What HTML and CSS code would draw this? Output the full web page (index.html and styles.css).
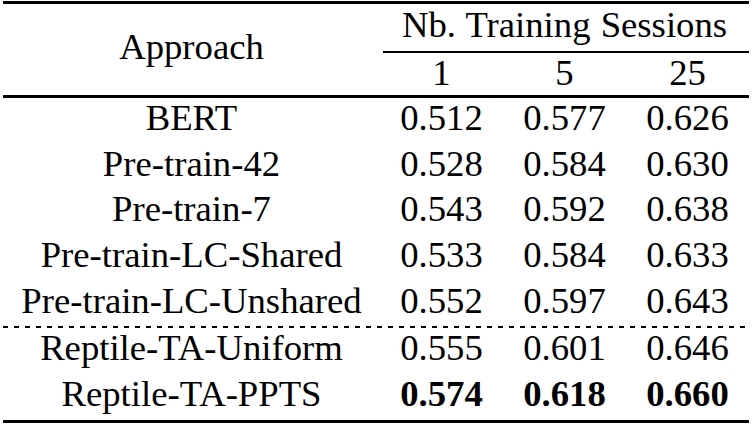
FILE: index.html
```html
<!DOCTYPE html>
<html>
<head>
<meta charset="utf-8">
<link rel="stylesheet" href="styles.css">
</head>
<body>
<div class="table">
  <div class="rule thick"></div>
  <div class="head">
    <div class="approach">Approach</div>
    <div class="group">
      <div class="group-title">Nb. Training Sessions</div>
      <div class="cmid"></div>
      <div class="cols"><span>1</span><span>5</span><span>25</span></div>
    </div>
  </div>
  <div class="rule mid"></div>
  <div class="block upper">
    <div class="row"><span>BERT</span><span>0.512</span><span>0.577</span><span>0.626</span></div>
    <div class="row"><span>Pre-train-42</span><span>0.528</span><span>0.584</span><span>0.630</span></div>
    <div class="row"><span>Pre-train-7</span><span>0.543</span><span>0.592</span><span>0.638</span></div>
    <div class="row"><span>Pre-train-LC-Shared</span><span>0.533</span><span>0.584</span><span>0.633</span></div>
    <div class="row"><span>Pre-train-LC-Unshared</span><span>0.552</span><span>0.597</span><span>0.643</span></div>
  </div>
  <div class="dash"></div>
  <div class="block lower">
    <div class="row"><span>Reptile-TA-Uniform</span><span>0.555</span><span>0.601</span><span>0.646</span></div>
    <div class="row best"><span>Reptile-TA-PPTS</span><span>0.574</span><span>0.618</span><span>0.660</span></div>
  </div>
  <div class="rule thick"></div>
</div>
</body>
</html>
```
FILE: styles.css
```css
html, body {
  margin: 0;
  padding: 0;
  background: #fff;
}
body {
  padding: 1px 0 0 3px;
  font-family: "Liberation Serif", "Times New Roman", serif;
  font-size: 36.7px;
  color: #000;
}
.table {
  width: 746px;
  display: flex;
  flex-direction: column;
}
.rule {
  background: #000;
}
.rule.thick { height: 3px; }
.rule.mid { height: 3px; }
.head {
  display: grid;
  grid-template-columns: 377px 369px;
}
.approach {
  display: flex;
  align-items: center;
  justify-content: center;
  line-height: 40px;
  padding-bottom: 5px;
}
.group {
  display: flex;
  flex-direction: column;
}
.group-title {
  height: 47px;
  display: flex;
  align-items: center;
  justify-content: center;
  line-height: 40px;
  padding-bottom: 6px;
  box-sizing: border-box;
  word-spacing: 1px;
}
.cmid {
  height: 2px;
  margin-left: 3px;
  background: #000;
}
.cols {
  height: 42px;
  display: grid;
  grid-template-columns: repeat(3, 123px);
  align-items: center;
  line-height: 40px;
  padding-bottom: 4px;
  box-sizing: border-box;
}
.cols span { text-align: center; }
.block {
  display: flex;
  flex-direction: column;
}
.row {
  display: grid;
  grid-template-columns: 377px repeat(3, 123px);
  align-items: center;
  line-height: 40px;
  padding-bottom: 5px;
  box-sizing: border-box;
}
.upper .row { height: 45.6px; }
.lower .row { height: 46px; }
.row span { text-align: center; }
.row.best span + span { font-weight: bold; }
.dash {
  height: 2px;
  background: repeating-linear-gradient(90deg, #000 0 5px, transparent 5px 11px);
}
```
